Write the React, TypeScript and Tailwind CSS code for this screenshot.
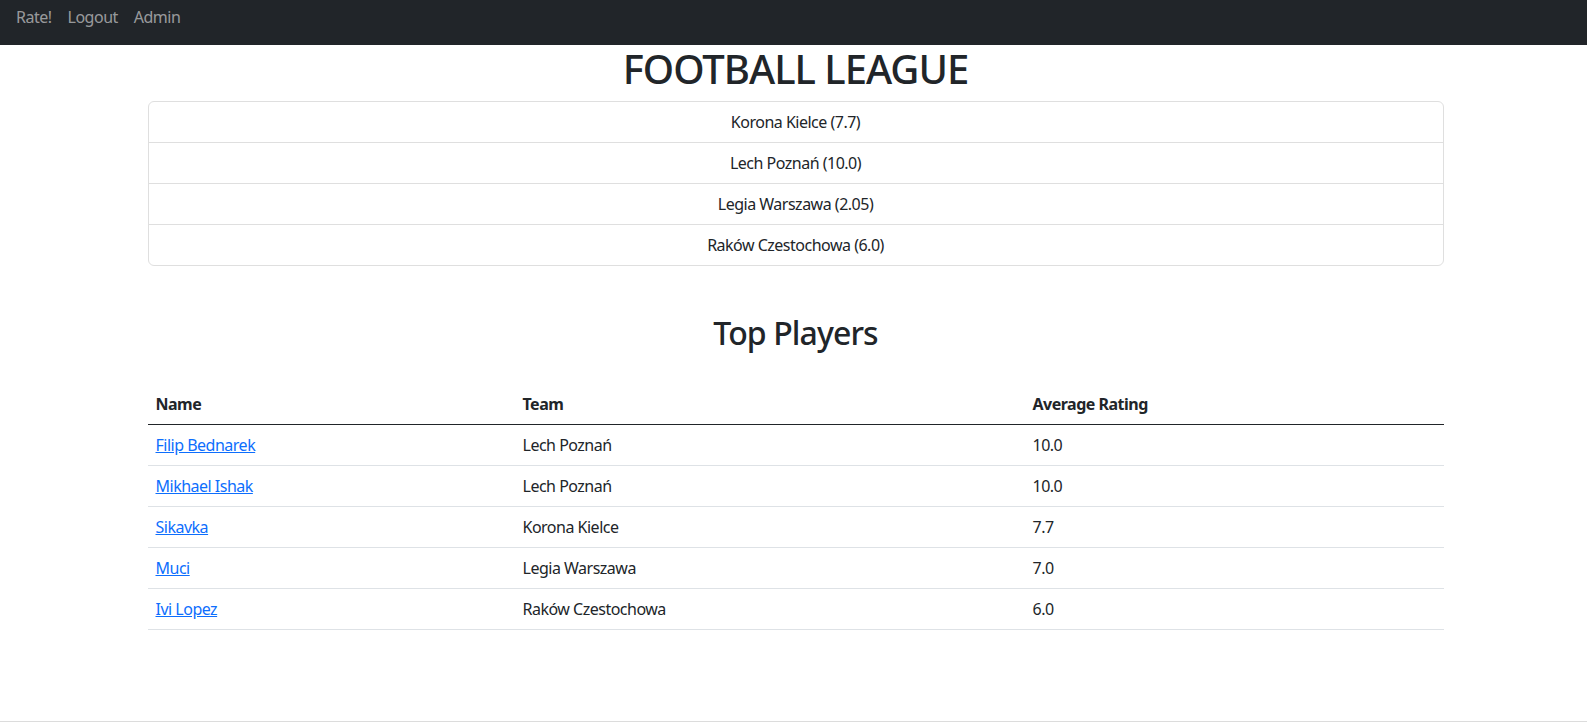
const teams = [
  { name: "Korona Kielce", rating: "7.7" },
  { name: "Lech Poznań", rating: "10.0" },
  { name: "Legia Warszawa", rating: "2.05" },
  { name: "Raków Czestochowa", rating: "6.0" },
];

const players = [
  { name: "Filip Bednarek", team: "Lech Poznań", rating: "10.0" },
  { name: "Mikhael Ishak", team: "Lech Poznań", rating: "10.0" },
  { name: "Sikavka", team: "Korona Kielce", rating: "7.7" },
  { name: "Muci", team: "Legia Warszawa", rating: "7.0" },
  { name: "Ivi Lopez", team: "Raków Czestochowa", rating: "6.0" },
];

function Navbar() {
  return (
    <nav className="h-[45px] bg-[#212529] px-2">
      <div className="flex pt-[5px]">
        {["Rate!", "Logout", "Admin"].map(link => (
          <a key={link} href="#" className="px-2 text-base leading-6 text-[rgba(255,255,255,0.55)]">
            {link}
          </a>
        ))}
      </div>
    </nav>
  );
}

export default function App() {
  return (
    <div
      className="flex h-[723px] flex-col bg-white tracking-[-0.5px] text-[#212529]"
      style={{ fontFamily: '"Noto Sans", "Open Sans", sans-serif' }}
    >
      <Navbar />
      <main className="mx-auto w-full max-w-[1320px] flex-1 pl-[14px] pr-[10px]">
        <h1 className="mb-2 text-center text-[40px] font-medium leading-[1.2] tracking-[-1px]">
          FOOTBALL LEAGUE
        </h1>

        <ul className="overflow-hidden rounded-md border border-[#dfdfdf]">
          {teams.map(team => (
            <li
              key={team.name}
              className="border-b border-[#dfdfdf] px-4 py-2 text-center text-base leading-6 last:border-b-0"
            >
              {team.name} ({team.rating})
            </li>
          ))}
        </ul>

        <h2 className="mt-12 text-center text-[32px] font-medium leading-[1.2] tracking-[-0.9px]">
          Top Players
        </h2>

        <table className="mt-8 w-full border-collapse text-left text-base leading-6">
          <thead>
            <tr>
              <th className="w-[367px] border-b border-[#212529] p-2 font-bold">Name</th>
              <th className="w-[510px] border-b border-[#212529] p-2 font-bold">Team</th>
              <th className="border-b border-[#212529] p-2 font-bold">Average Rating</th>
            </tr>
          </thead>
          <tbody>
            {players.map(player => (
              <tr key={player.name} className="border-b border-[#dee2e6]">
                <td className="p-2">
                  <a href="#" className="text-[#0d6efd] underline">
                    {player.name}
                  </a>
                </td>
                <td className="p-2">{player.team}</td>
                <td className="p-2">{player.rating}</td>
              </tr>
            ))}
          </tbody>
        </table>
      </main>
      <footer className="h-[2px] border-t border-[#dcdcdc]" />
    </div>
  );
}
